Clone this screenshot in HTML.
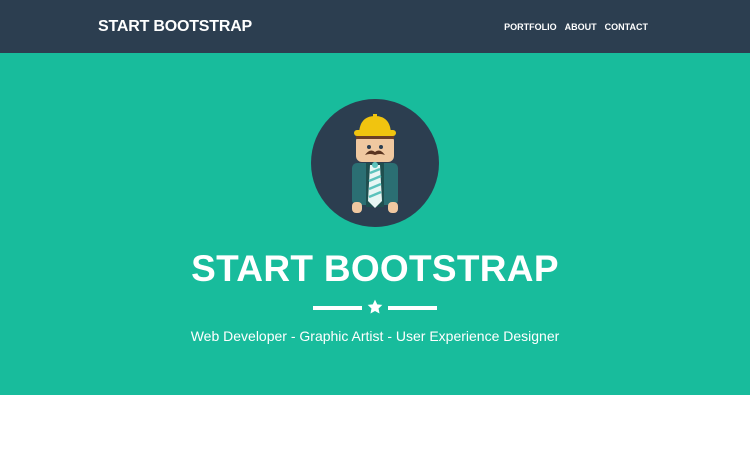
<!DOCTYPE html>
<html><head><style>
body{margin:0;width:750px;height:450px;overflow:hidden;background:#fff;font-family:"Liberation Sans",sans-serif;position:relative}
.nav{position:absolute;left:0;top:0;width:750px;height:53px;background:#2c3e50;color:#fff}
.brand{position:absolute;left:98px;top:18px;font-weight:bold;font-size:16px;letter-spacing:-0.2px}
.links{position:absolute;right:102px;top:22px;font-weight:bold;font-size:9px;word-spacing:0}
.links span{margin-left:8px}
.hero{position:absolute;left:0;top:53px;width:750px;height:342px;background:#18bc9c;color:#fff}
h1{position:absolute;top:195px;left:0;width:750px;margin:0;text-align:center;font-size:37px;font-weight:bold;letter-spacing:0.3px}
.line{position:absolute;top:253px;height:4px;width:49px;background:#fff}
.sub{position:absolute;top:275px;width:750px;text-align:center;font-size:14px}
</style></head><body>
<div class="nav"><div class="brand">START BOOTSTRAP</div><div class="links"><span>PORTFOLIO</span><span>ABOUT</span><span>CONTACT</span></div></div>
<div class="hero">
<svg style="position:absolute;left:300px;top:42px" width="150" height="140" viewBox="0 0 150 140">
<circle cx="75" cy="68" r="64" fill="#2c3e50"/>
<rect x="52" y="68" width="46" height="42" rx="5" fill="#2b6f73"/>
<rect x="66" y="68" width="18" height="44" fill="#1f4f4f"/>
<path d="M70 70 L80 70 L82 106 L75 113 L68 106 Z" fill="#e8f6f4"/>
<path d="M70 78 L80 74 M69 86 L81 81 M69 94 L81 89 M69 102 L81 97" stroke="#5bc2bc" stroke-width="2.5"/>
<circle cx="75" cy="70" r="3" fill="#5bc2bc"/>
<rect x="52" y="107" width="10" height="11" rx="4" fill="#f0c8a0"/>
<rect x="88" y="107" width="10" height="11" rx="4" fill="#f0c8a0"/>
<rect x="56" y="40" width="38" height="27" rx="6" fill="#f0c8a0"/>
<rect x="56" y="38" width="38" height="6" fill="#6b3e26"/>
<circle cx="69" cy="52" r="2" fill="#2c3e50"/><circle cx="81" cy="52" r="2" fill="#2c3e50"/>
<path d="M65 60 Q70 53 75 57 Q80 53 85 60 Q80 58 75 60 Q70 58 65 60Z" fill="#5a3420"/>
<path d="M59 38 Q60 21 75 21 Q90 21 91 38Z" fill="#f1c40f"/>
<rect x="54" y="35" width="42" height="6" rx="3" fill="#f1c40f"/>
<rect x="73" y="19" width="4" height="4" fill="#f1c40f"/>
</svg>
<h1>START BOOTSTRAP</h1>
<div class="line" style="left:313px"></div>
<svg style="position:absolute;left:367px;top:246px" width="16" height="16" viewBox="0 0 24 24"><path d="M12 1l3.3 7 7.7.9-5.7 5.3 1.5 7.6L12 18l-6.8 3.8 1.5-7.6L1 8.9 8.7 8z" fill="#fff"/></svg>
<div class="line" style="left:388px"></div>
<div class="sub">Web Developer - Graphic Artist - User Experience Designer</div>
</div>
</body></html>
